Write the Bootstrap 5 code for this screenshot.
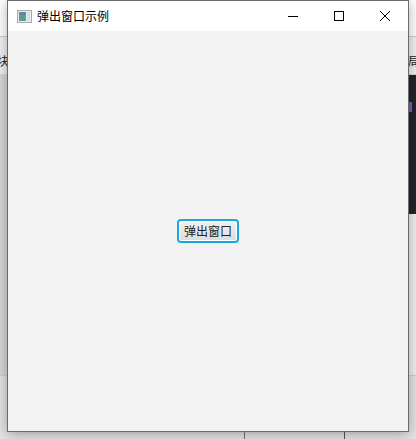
<!DOCTYPE html>
<html lang="zh">
<head>
<meta charset="utf-8">
<link href="https://cdn.jsdelivr.net/npm/bootstrap@5.3.0/dist/css/bootstrap.min.css" rel="stylesheet">
<style>
html,body{margin:0;height:100%;overflow:hidden}
body{font-family:"Noto Sans CJK SC","Liberation Sans",sans-serif;font-size:12px;background:#dcdcdc}
.desk{position:relative;width:416px;height:439px;overflow:hidden;background:#d8d8d8}
.bg-top{position:absolute;left:0;top:0;width:416px;height:36px;background:#fff}
.bg-bar{position:absolute;left:0;top:36px;width:416px;height:38px;background:#f1f1f1;border-top:1px solid #cfcfcf}
.bg-code{position:absolute;left:408px;top:75px;width:8px;height:139px;background:#21252b}
.bg-purple{position:absolute;left:408px;top:102px;width:4px;height:10px;background:#8a55b8}
.bg-side{position:absolute;left:408px;top:214px;width:8px;height:162px;background:#f0f0f0}
.bg-low{position:absolute;left:0;top:375px;width:416px;height:64px;background:#e4e4e4;border-top:1px solid #d0d0d0}
.bg-line1{position:absolute;left:244px;top:420px;width:1px;height:19px;background:#777}
.bg-line2{position:absolute;left:344px;top:420px;width:1px;height:19px;background:#555}
.bg-txt{position:absolute;left:-3px;top:53px;font-size:12px;line-height:16px;color:#222}
.bg-txt2{position:absolute;left:408px;top:53px;font-size:12px;line-height:16px;color:#222;white-space:nowrap}
.win{position:absolute;left:7px;top:0;width:402px;height:432px;background:#f3f3f3;border:1px solid #6b6b6b;box-shadow:0 2px 12px rgba(0,0,0,.32)}
.tbar{height:30px;background:#fff;color:#000;font-size:12px;line-height:16px}
.ticon{width:15px;height:13px;margin-left:9px;margin-right:5px}
.wbtns{gap:0}
.wbtn{width:46px;height:30px}
.wbody{height:400px}
.popbtn{font-size:12px;line-height:16px;color:#222;padding:2px 5px;border:2px solid #1aa7e0;border-radius:4px;background:linear-gradient(#f1f1f1,#dcdcdc);box-shadow:inset 0 0 0 1px #fff}
</style>
</head>
<body>
<div class="desk">
  <div class="bg-top"></div>
  <div class="bg-bar"></div>
  <div class="bg-txt">块</div>
  <div class="bg-txt2">局</div>
  <div class="bg-code"></div>
  <div class="bg-purple"></div>
  <div class="bg-side"></div>
  <div class="bg-low"></div>
  <div class="bg-line1"></div>
  <div class="bg-line2"></div>
  <div class="win d-flex flex-column">
    <div class="tbar d-flex align-items-center">
      <svg class="ticon" viewBox="0 0 15 13"><rect x=".5" y=".5" width="14" height="12" fill="#eee" stroke="#a9a9a9"/><rect x="2" y="2" width="7" height="9" fill="#5c9c94"/><rect x="2" y="2" width="7" height="3" fill="#5f87a8"/><rect x="10" y="2" width="3" height="9" fill="#d8e2dc"/></svg>
      <span>弹出窗口示例</span>
      <div class="wbtns d-flex ms-auto">
        <div class="wbtn d-flex align-items-center justify-content-center"><svg width="12" height="12" viewBox="0 0 12 12"><path d="M1 6.5H11" stroke="#000" fill="none"/></svg></div>
        <div class="wbtn d-flex align-items-center justify-content-center"><svg width="12" height="12" viewBox="0 0 12 12"><rect x="1.5" y="1.5" width="9" height="9" stroke="#000" fill="none"/></svg></div>
        <div class="wbtn d-flex align-items-center justify-content-center"><svg width="12" height="12" viewBox="0 0 12 12"><path d="M1 1L11 11M11 1L1 11" stroke="#000" fill="none"/></svg></div>
      </div>
    </div>
    <div class="wbody d-flex align-items-center justify-content-center">
      <button type="button" class="btn popbtn">弹出窗口</button>
    </div>
  </div>
</div>
<script src="https://cdn.jsdelivr.net/npm/bootstrap@5.3.0/dist/js/bootstrap.bundle.min.js"></script>
</body>
</html>
